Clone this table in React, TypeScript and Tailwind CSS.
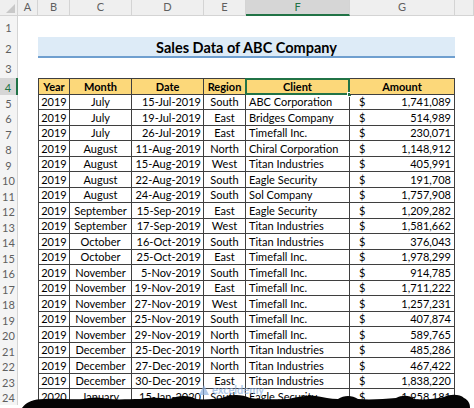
import React from "react";

const rows: [string, string, string, string, string, string][] = [
  ["2019", "July", "15-Jul-2019", "South", "ABC Corporation", "1,741,089"],
  ["2019", "July", "19-Jul-2019", "East", "Bridges Company", "514,989"],
  ["2019", "July", "26-Jul-2019", "East", "Timefall Inc.", "230,071"],
  ["2019", "August", "11-Aug-2019", "North", "Chiral Corporation", "1,148,912"],
  ["2019", "August", "15-Aug-2019", "West", "Titan Industries", "405,991"],
  ["2019", "August", "22-Aug-2019", "South", "Eagle Security", "191,708"],
  ["2019", "August", "24-Aug-2019", "South", "Sol Company", "1,757,908"],
  ["2019", "September", "15-Sep-2019", "East", "Eagle Security", "1,209,282"],
  ["2019", "September", "17-Sep-2019", "West", "Titan Industries", "1,581,662"],
  ["2019", "October", "16-Oct-2019", "South", "Titan Industries", "376,043"],
  ["2019", "October", "25-Oct-2019", "East", "Timefall Inc.", "1,978,299"],
  ["2019", "November", "5-Nov-2019", "South", "Timefall Inc.", "914,785"],
  ["2019", "November", "19-Nov-2019", "East", "Timefall Inc.", "1,711,222"],
  ["2019", "November", "27-Nov-2019", "West", "Timefall Inc.", "1,257,231"],
  ["2019", "November", "25-Nov-2019", "South", "Timefall Inc.", "407,874"],
  ["2019", "November", "29-Nov-2019", "North", "Timefall Inc.", "589,765"],
  ["2019", "December", "25-Dec-2019", "North", "Titan Industries", "485,286"],
  ["2019", "December", "27-Dec-2019", "North", "Titan Industries", "467,422"],
  ["2019", "December", "30-Dec-2019", "East", "Titan Industries", "1,838,220"],
  ["2020", "January", "15-Jan-2020", "South", "Eagle Security", "1,958,181"],
];

const letters = ["A", "B", "C", "D", "E", "F", "G", ""];

const line = "border-[#3f3f3f]";

function RowHead({ n, active }: { n: number; active?: boolean }) {
  return (
    <div
      className={
        "flex items-center justify-center pt-[3px] text-[11px] border-r " +
        (active
          ? "bg-[#d6d6d6] text-[#217346] border-r-2 border-r-[#217346]"
          : "bg-[#f4f4f4] text-[#5f5f5f] border-[#d4d4d4]")
      }
    >
      {n}
    </div>
  );
}

export default function App() {
  return (
    <div className="relative w-[474px] h-[408px] overflow-hidden bg-white font-['Lato',_sans-serif] text-black">
      <div className="grid grid-cols-[18px_20px_32px_62px_72px_42px_104px_105px_1fr] grid-rows-[16px_21px_21px_20px_16.5px_repeat(20,15.5px)]">
        {/* column headers */}
        <div className="relative bg-[#efefef] border-r border-b border-[#d4d4d4]">
          <div className="absolute right-[2px] bottom-[2px] w-0 h-0 border-l-[9px] border-l-transparent border-b-[9px] border-b-[#c8c8c8]" />
        </div>
        {letters.map((l, i) => (
          <div
            key={i}
            className={
              "flex items-center justify-center text-[11px] border-r " +
              (l === "F"
                ? "bg-[#d6d6d6] text-[#217346] border-[#d4d4d4] border-b-2 border-b-[#217346]"
                : "bg-[#efefef] text-[#5f5f5f] border-[#d4d4d4] border-b")
            }
          >
            {l}
          </div>
        ))}

        {/* row 1 */}
        <RowHead n={1} />
        <div className="col-span-8" />

        {/* row 2 - title */}
        <RowHead n={2} />
        <div />
        <div className="col-span-6 flex items-center justify-center bg-[#ddebf7] border-b-2 border-[#6f9fcf] pt-[2px] text-[14.5px] font-bold">
          Sales Data of ABC Company
        </div>
        <div />

        {/* row 3 */}
        <RowHead n={3} />
        <div className="col-span-8" />

        {/* row 4 - table header */}
        <RowHead n={4} active />
        <div />
        {["Year", "Month", "Date", "Region", "Client", "Amount"].map((h, i) => (
          <div
            key={h}
            className={
              "relative flex items-center justify-center bg-[#fcd87a] border-t border-b border-r text-[11px] font-bold pt-[1px] " +
              line +
              (i === 0 ? " border-l" : "")
            }
          >
            {h}
            {h === "Client" && (
              <>
                <div className="absolute -inset-[1px] border-2 border-[#217346]" />
                <div className="absolute -right-[3px] -bottom-[3px] w-[5px] h-[5px] bg-[#217346] border border-white" />
              </>
            )}
          </div>
        ))}
        <div />

        {/* data rows */}
        {rows.map((r, idx) => (
          <React.Fragment key={idx}>
            <RowHead n={idx + 5} />
            <div />
            <div className={"flex items-center justify-center border-l border-r border-b text-[11px] pt-[1px] " + line}>{r[0]}</div>
            <div className={"flex items-center justify-center border-r border-b text-[11px] pt-[1px] " + line}>{r[1]}</div>
            <div className={"flex items-center justify-end pr-[2px] border-r border-b text-[11px] pt-[1px] " + line}>{r[2]}</div>
            <div className={"flex items-center justify-center border-r border-b text-[11px] pt-[1px] " + line}>{r[3]}</div>
            <div className={"flex items-center pl-[3px] border-r border-b text-[11px] pt-[1px] whitespace-nowrap " + line}>{r[4]}</div>
            <div className={"flex items-center justify-between pl-[9px] pr-[3px] border-r border-b text-[11px] pt-[1px] " + line}>
              <span>$</span>
              <span>{r[5]}</span>
            </div>
            <div />
          </React.Fragment>
        ))}
      </div>

      {/* watermark */}
      <div className="absolute left-[198px] top-[382px] flex items-center gap-[2px] text-[11px] font-bold text-[#8fb3e0] opacity-70">
        <svg width="12" height="12" viewBox="0 0 12 12">
          <path d="M1 11 L6 1 L11 11 Z" fill="#8fb3e0" />
        </svg>
        <span>exceldemy</span>
      </div>

      {/* torn black edge */}
      <svg className="absolute left-0 bottom-0" width="474" height="14" viewBox="0 0 474 14">
        <path
          d="M22 14 C26 8 34 5 44 5 C60 4 70 6 84 5 C92 3 100 3 108 5 C120 6 130 5 140 5 C150 3 160 4 170 5 C178 1 190 1 196 5 C204 6 214 5 222 4 C230 0 242 0 250 4 C262 6 276 5 288 5 C298 3 306 1 316 2 C324 3 330 5 338 5 C344 1 352 1 358 5 C370 6 384 5 396 4 C402 1 410 1 414 5 C424 6 434 5 444 3 C450 0 460 0 464 4 C468 6 470 9 470 14 Z"
          fill="#050505"
        />
      </svg>
    </div>
  );
}
